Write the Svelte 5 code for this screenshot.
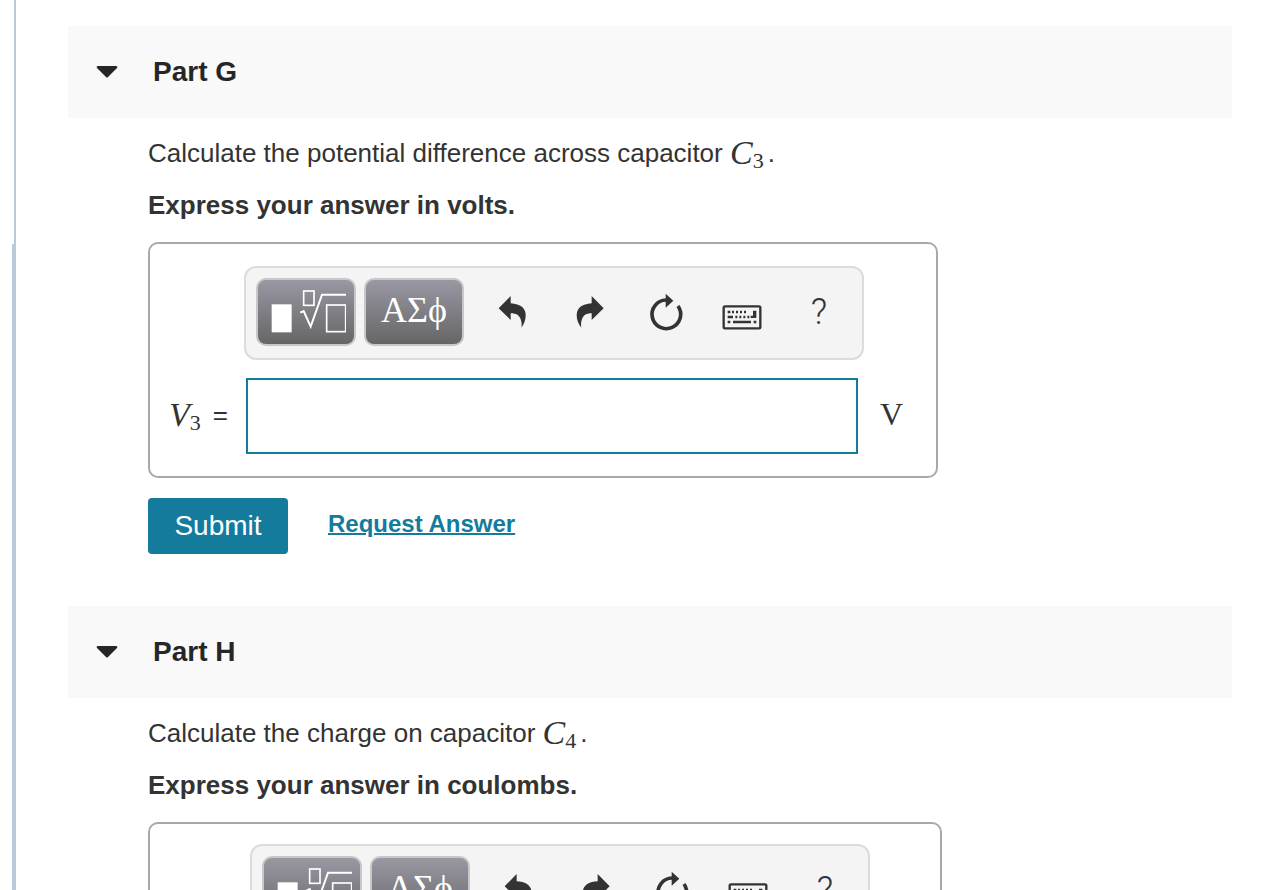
<script lang="ts">
	interface Part {
		id: string;
		title: string;
		prompt: string;
		variable: string;
		index: number;
		instruction: string;
		symbol: string;
		unit: string;
		wide?: boolean;
	}

	const parts: Part[] = [
		{
			id: 'g',
			title: 'Part G',
			prompt: 'Calculate the potential difference across capacitor',
			variable: 'C',
			index: 3,
			instruction: 'Express your answer in volts.',
			symbol: 'V',
			unit: 'V'
		},
		{
			id: 'h',
			title: 'Part H',
			prompt: 'Calculate the charge on capacitor',
			variable: 'C',
			index: 4,
			instruction: 'Express your answer in coulombs.',
			symbol: 'Q',
			unit: 'C',
			wide: true
		}
	];

	let answers = $state<Record<string, string>>({ g: '', h: '' });
	let open = $state<Record<string, boolean>>({ g: true, h: true });

	function handleSubmit(e: Event) {
		e.preventDefault();
	}
</script>

{#snippet toolbar()}
	<div class="toolbar" role="toolbar" aria-label="Equation tools">
		<button type="button" class="palette" aria-label="Templates">
			<svg class="template-icon" viewBox="78 84 240 144" fill="none" stroke="#fff">
				<rect x="95" y="133" width="60" height="84" fill="#fff" stroke="none" />
				<rect x="191" y="93" width="31" height="43" stroke-width="5" />
				<path d="M181 158l10-5 21 47 34-96h72" stroke-width="6" />
				<rect x="260" y="135" width="57" height="80" stroke-width="5" />
			</svg>
		</button>
		<button type="button" class="palette greek" aria-label="Symbols">ΑΣϕ</button>

		<div class="tools">
			<button type="button" class="tool" aria-label="Undo">
				<svg class="icon-arrow" viewBox="54 102 90 108" fill="#333">
					<path d="M56 145L92 108v22c30 2 45 14 45 36 0 14-5 27-13 37 2-8 1-17-2-25-4-12-13-18-30-18v20z" />
				</svg>
			</button>
			<button type="button" class="tool" aria-label="Redo">
				<svg class="icon-arrow" viewBox="284 102 90 108" fill="#333">
					<path d="M370 145L334 108v22c-30 2-45 14-45 36 0 14 6 27 14 37-2-8-1-17 2-25 4-12 12-18 29-18v20z" />
				</svg>
			</button>
			<button type="button" class="tool" aria-label="Reset">
				<svg class="icon-reset" viewBox="504 102 108 108">
					<path d="M558 120A43 43 0 1 0 594 138" fill="none" stroke="#333" stroke-width="11" />
					<path d="M557 101l23 21-23 21z" fill="#333" />
				</svg>
			</button>
			<button type="button" class="tool" aria-label="Keyboard shortcuts">
				<svg class="icon-keyboard" viewBox="726 102 120 108">
					<rect x="731" y="139" width="110" height="66" rx="4" fill="none" stroke="#333" stroke-width="7" />
					<path
						d="M743 156h8m5 0h6m6 0h6m6 0h6m6 0h6M743 171h16m7 0h6m6 0h6m6 0h6m6 0h6M743 186h8m8 0h54m8 0h8"
						fill="none"
						stroke="#333"
						stroke-width="7"
					/>
					<path d="M819 152h10v22h-17v-7h7z" fill="#333" />
				</svg>
			</button>
			<button type="button" class="tool help" aria-label="Help">?</button>
		</div>
	</div>
{/snippet}

<div class="page">
	<div class="rail">
		<div class="rail-thin"></div>
		<div class="rail-thick"></div>
	</div>

	<main>
		{#each parts as part (part.id)}
			<section>
				<h2>
					<button
						type="button"
						class="part-header"
						aria-expanded={open[part.id]}
						onclick={() => (open[part.id] = !open[part.id])}
					>
						<svg class="caret" class:closed={!open[part.id]} viewBox="0 0 22 12">
							<path d="M2 0h18q2 0 1 2l-9 9q-1 1-2 0L1 2q-1-2 1-2z" fill="#262626" />
						</svg>
						{part.title}
					</button>
				</h2>

				{#if open[part.id]}
					<form class="part-body" onsubmit={handleSubmit}>
						<p class="prompt">
							{part.prompt}
							<span class="math"><i>{part.variable}</i><sub>{part.index}</sub></span>.
						</p>
						<p class="instruction">{part.instruction}</p>

						<div class="answer-box" class:wide={part.wide}>
							{@render toolbar()}
							<label class="answer-label" for="answer-{part.id}">
								<span class="math"><i>{part.symbol}</i><sub>{part.index}</sub></span>
								<span class="equals">=</span>
							</label>
							<input
								id="answer-{part.id}"
								class="answer-input"
								type="text"
								autocomplete="off"
								bind:value={answers[part.id]}
							/>
							<span class="unit">{part.unit}</span>
						</div>

						<div class="actions">
							<button type="submit" class="submit">Submit</button>
							<a class="request" href="#answer-{part.id}">Request Answer</a>
						</div>
					</form>
				{/if}
			</section>
		{/each}
	</main>
</div>

<style>
	:global(body) {
		margin: 0;
		background: #fff;
	}

	.page {
		display: flex;
		height: 100vh;
		overflow-y: auto;
		scrollbar-width: none;
		font-family: 'Liberation Sans', Arial, sans-serif;
		font-size: 26px;
		color: #333;
	}

	.rail {
		position: sticky;
		top: 0;
		display: flex;
		flex-direction: column;
		align-items: flex-end;
		flex: 0 0 16px;
		height: 100vh;
	}

	.rail-thin {
		width: 2px;
		height: 244px;
		background: #b9cadd;
	}

	.rail-thick {
		flex: 1;
		width: 4px;
		background: #b9cadd;
	}

	main {
		flex: 1;
		min-width: 0;
		padding: 26px 52px 0;
	}

	section {
		padding-bottom: 52px;
	}

	button {
		margin: 0;
		font-family: inherit;
		cursor: pointer;
	}

	h2 {
		margin: 0;
	}

	.part-header {
		display: flex;
		align-items: center;
		gap: 35px;
		width: 100%;
		height: 92px;
		padding: 0 28px;
		border: none;
		background: #f9f9f9;
		color: #262626;
		font-size: 28px;
		font-weight: 700;
		text-align: left;
	}

	.caret {
		width: 22px;
		height: 12px;
	}

	.caret.closed {
		transform: rotate(-90deg);
	}

	.part-body {
		padding: 9px 0 0 80px;
	}

	.prompt,
	.instruction {
		margin: 0;
		line-height: 52px;
	}

	.instruction {
		font-weight: 700;
	}

	.math {
		font-family: 'Liberation Serif', 'Times New Roman', serif;
		font-size: 34px;
		line-height: 0;
	}

	.math i {
		vertical-align: -2px;
	}

	.math sub {
		margin-right: 4px;
		font-size: 22px;
		line-height: 0;
		vertical-align: -6px;
	}

	.answer-box {
		display: grid;
		grid-template-columns: 96px 612px 78px;
		row-gap: 18px;
		align-items: center;
		box-sizing: border-box;
		width: fit-content;
		margin-top: 11px;
		padding: 22px 0;
		border: 2px solid #a9a9a9;
		border-radius: 10px;
	}

	.answer-box.wide {
		grid-template-columns: 102px 612px 76px;
		padding-top: 20px;
	}

	.toolbar {
		display: flex;
		grid-column: 2 / 4;
		gap: 8px;
		box-sizing: border-box;
		width: 620px;
		margin-left: -2px;
		padding: 10px 5px 12px 10px;
		border: 2px solid #dcdcdc;
		border-radius: 12px;
		background: #f4f4f4;
	}

	.palette {
		display: flex;
		align-items: center;
		justify-content: center;
		box-sizing: border-box;
		width: 100px;
		height: 68px;
		padding: 0;
		border: 2px solid #c8c8c8;
		border-radius: 10px;
		background: linear-gradient(#9b99a5, #646464) border-box;
		color: #fff;
	}

	.greek {
		padding-bottom: 4px;
		font-family: 'Liberation Serif', 'Times New Roman', serif;
		font-size: 36px;
	}

	.template-icon {
		width: 80px;
		height: 48px;
	}

	.tools {
		display: flex;
		flex: 1;
		margin-left: 3px;
	}

	.tool {
		display: flex;
		flex: 1;
		align-items: center;
		justify-content: center;
		padding: 0;
		border: none;
		background: none;
		color: #333;
	}

	.icon-arrow {
		width: 30px;
		height: 36px;
	}

	.icon-reset {
		width: 36px;
		height: 36px;
		overflow: visible;
	}

	.icon-keyboard {
		width: 40px;
		height: 36px;
	}

	.help {
		font-family: Roboto, sans-serif;
		font-size: 36px;
		font-weight: 300;
	}

	.answer-label {
		display: flex;
		align-items: baseline;
		justify-content: flex-end;
		gap: 8px;
		padding: 0 18px 2px 0;
		line-height: 36px;
	}

	.answer-input {
		box-sizing: border-box;
		width: 100%;
		height: 76px;
		padding: 0 16px;
		border: 2px solid #147b9c;
		border-radius: 0;
		outline: none;
		background: #fff;
		color: #333;
		font-family: inherit;
		font-size: 28px;
	}

	.unit {
		padding: 0 0 4px 22px;
		font-family: 'Liberation Serif', 'Times New Roman', serif;
		font-size: 32px;
		line-height: 36px;
	}

	.actions {
		display: flex;
		align-items: center;
		gap: 40px;
		margin-top: 20px;
	}

	.submit {
		width: 140px;
		height: 56px;
		padding: 0;
		border: none;
		border-radius: 4px;
		background: #147b9c;
		color: #fff;
		font-size: 28px;
	}

	.request {
		padding-bottom: 4px;
		color: #147b9c;
		font-size: 24px;
		font-weight: 700;
		text-decoration: underline;
		text-decoration-thickness: 2px;
	}
</style>
